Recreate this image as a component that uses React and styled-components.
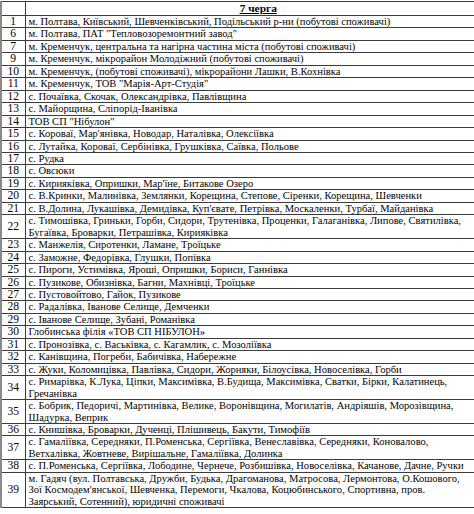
import React from "react";
import styled, { createGlobalStyle } from "styled-components";

const GlobalStyle = createGlobalStyle`
  html, body {
    margin: 0;
    padding: 0;
    background: #fff;
    overflow: hidden;
  }
  body {
    font-family: "Liberation Serif", "Times New Roman", serif;
    color: #000;
  }
`;

const Page = styled.div`
  width: 474px;
  height: 514px;
  overflow: hidden;
`;

const Table = styled.table`
  border-collapse: collapse;
  width: 492px;
  margin-top: 1px;
  border-left: 2px solid #8a8a8a;
  table-layout: fixed;
  font-family: "Liberation Serif", "Times New Roman", serif;
  font-size: 10.55px;
  line-height: 11.45px;
  color: #050505;
`;

const Cell = styled.td`
  border: 1px solid #3c3c3c;
  padding: 0 0 0 3px;
  white-space: nowrap;
  vertical-align: middle;
  font-family: inherit;
  font-size: inherit;
  line-height: inherit;
`;

const NumCell = styled(Cell)`
  padding: 0;
  text-align: center;
  font-size: 11.6px;
`;

const HeadCell = styled(Cell)`
  height: 13px;
  text-align: center;
  font-weight: bold;
  font-size: 11.4px;
  text-decoration: underline;
  padding: 0;
`;

const rows = [
  ["1", ["м. Полтава, Київський, Шевченківський, Подільський р-ни (побутові споживачі)"]],
  ["6", ['м. Полтава, ПАТ "Тепловозоремонтний завод"']],
  ["7", ["м. Кременчук, центральна та нагірна частина міста (побутові споживачі)"]],
  ["9", ["м. Кременчук, мікрорайон Молодіжний (побутові споживачі)"]],
  ["10", ["м. Кременчук, (побутові споживачі), мікрорайони Лашки, В.Кохнівка"]],
  ["11", ['м. Кременчук, ТОВ "Марія-Арт-Студія"']],
  ["12", ["с. Почаївка, Скочак, Олександрівка, Павлівщина"]],
  ["13", ["с. Майорщина, Сліпорід-Іванівка"]],
  ["14", ['ТОВ СП "Нібулон"']],
  ["15", ["с. Короваї, Мар'янівка, Новодар, Наталівка, Олексіївка"]],
  ["16", ["с. Лутайка, Короваї, Сербінівка, Грушківка, Саївка, Польове"]],
  ["17", ["с. Рудка"]],
  ["18", ["с. Овсюки"]],
  ["19", ["с. Кирияківка, Опришки, Мар'їне, Битакове Озеро"]],
  ["20", ["с. В.Кринки, Малинівка, Землянки, Корещина, Степове, Сіренки, Корещина, Шевченки"]],
  ["21", ["с. В.Долина, Лукашівка, Демидівка, Куп'євате, Петрівка, Москаленки, Турбаї, Майданівка"]],
  ["22", [
    "с. Тимошівка, Гриньки, Горби, Сидори, Трутенівка, Проценки, Галаганівка, Липове, Святилівка,",
    "Бугаївка, Броварки, Петрашівка, Кирияківка",
  ]],
  ["23", ["с. Манжелія, Сиротенки, Ламане, Троїцьке"]],
  ["24", ["с. Заможне, Федорівка, Глушки, Попівка"]],
  ["25", ["с. Пироги, Устимівка, Яроші, Опришки, Бориси, Ганнівка"]],
  ["26", ["с. Пузикове, Обизнівка, Багни, Махнівці, Троїцьке"]],
  ["27", ["с. Пустовойтово, Гайок, Пузикове"]],
  ["28", ["с. Радалівка, Іванове Селище, Демченки"]],
  ["29", ["с. Іванове Селище, Зубані, Романівка"]],
  ["30", ["Глобинська філія «ТОВ СП НІБУЛОН»"]],
  ["31", ["с. Пронозівка, с. Васьківка, с. Кагамлик, с. Мозоліївка"]],
  ["32", ["с. Канівщина, Погреби, Бабичівка, Набережне"]],
  ["33", ["с. Жуки, Коломицівка, Павлівка, Сидори, Жорняки, Білоусівка, Новоселівка, Горби"]],
  ["34", [
    "с. Римарівка, К.Лука, Ціпки, Максимівка, В.Будища, Максимівка, Сватки, Бірки, Калатинець,",
    "Гречанівка",
  ]],
  ["35", [
    "с. Бобрик, Педоричі, Мартинівка, Велике, Воронівщина, Могилатів, Андріяшів, Морозівщина,",
    "Шадурка, Веприк",
  ]],
  ["36", ["с. Книшівка, Броварки, Дученці, Плішивець, Бакути, Тимофіїв"]],
  ["37", [
    "с. Гамаліївка, Середняки, П.Роменська, Сергіївка, Венеславівка, Середняки, Коновалово,",
    "Ветхалівка, Жовтневе, Вирішальне, Гамаліївка, Долинка",
  ]],
  ["38", ["с. П.Роменська, Сергіївка, Лободине, Чернече, Розбишівка, Новоселівка, Качанове, Дачне, Ручки"]],
  ["39", [
    "м. Гадяч (вул. Полтавська, Дружби, Будька, Драгоманова, Матросова, Лермонтова, О.Кошового,",
    "Зої Космодем'янської, Шевченка, Перемоги, Чкалова, Коцюбинського, Спортивна, пров.",
    "Заярський, Сотенний), юридичні споживачі",
  ]],
];

const App = () => {
  return (
    <Page>
      <GlobalStyle />
      <Table>
        <colgroup>
          <col style={{ width: 24 }} />
          <col />
        </colgroup>
        <tbody>
          <tr>
            <NumCell />
            <HeadCell>7 черга</HeadCell>
          </tr>
          {rows.map(([num, lines]) => (
            <tr key={num}>
              <NumCell>{num}</NumCell>
              <Cell>
                {lines.map((line, i) => (
                  <React.Fragment key={i}>
                    {i > 0 && <br />}
                    {line}
                  </React.Fragment>
                ))}
              </Cell>
            </tr>
          ))}
        </tbody>
      </Table>
    </Page>
  );
};

export default App;
